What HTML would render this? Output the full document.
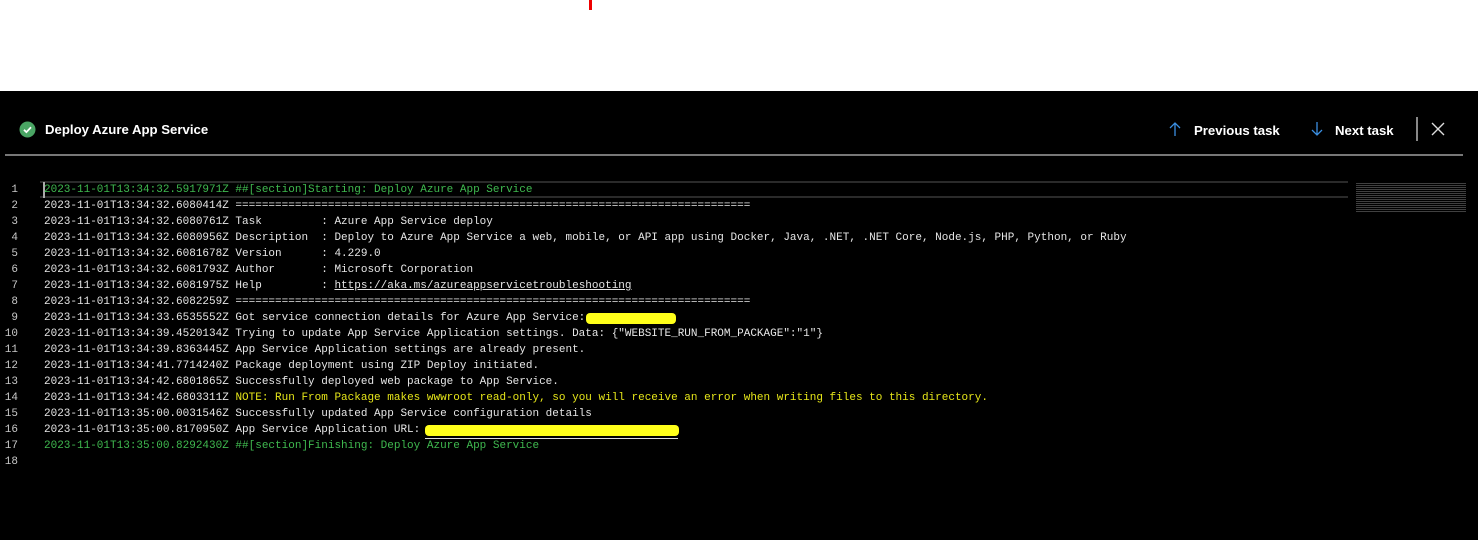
<!DOCTYPE html>
<html><head><style>
body{margin:0;width:1478px;height:540px;background:#fff;position:relative;overflow:hidden;font-family:"Liberation Sans",sans-serif}
#panel{position:absolute;left:0;top:91px;width:1478px;height:449px;background:#000}
.hdr{position:absolute;color:#fff;font-weight:bold;font-size:13.2px}
.log{position:absolute;left:0;top:182px;font-family:"Liberation Mono",monospace;font-size:11px;color:#e6e6e6}
.ln{position:absolute;left:0;width:1478px;height:16px;line-height:16px;white-space:pre}
.ln .n{position:absolute;left:0;width:18px;text-align:right;color:#c8c8c8}
.ln .t{position:absolute;left:44px}
.g{color:#3fb94f}.y{color:#e6e619}
.hl{position:absolute;background:#ffff1a;height:11px;border-radius:4px}
</style></head><body>
<div style="position:absolute;left:589px;top:0;width:3px;height:10px;background:#e00"></div>
<div id="panel"></div>
<svg style="position:absolute;left:19px;top:121px" width="17" height="17"><circle cx="8.5" cy="8.5" r="8" fill="#4aa564"/><path d="M5 8.8l2.4 2.3 4.6-4.8" stroke="#fff" stroke-width="1.8" fill="none"/></svg>
<div class="hdr" style="left:45px;top:122px">Deploy Azure App Service</div>
<svg style="position:absolute;left:1168px;top:121px" width="14" height="16"><path d="M7 15V2M2 7l5-5 5 5" stroke="#3a8ee0" stroke-width="1.3" fill="none"/></svg>
<div class="hdr" style="left:1194px;top:123px">Previous task</div>
<svg style="position:absolute;left:1310px;top:121px" width="14" height="16"><path d="M7 1v13M2 9l5 5 5-5" stroke="#3a8ee0" stroke-width="1.3" fill="none"/></svg>
<div class="hdr" style="left:1335px;top:123px">Next task</div>
<div style="position:absolute;left:1416px;top:117px;width:2px;height:24px;background:#888"></div>
<svg style="position:absolute;left:1431px;top:122px" width="14" height="14"><path d="M1 1l12 12M13 1L1 13" stroke="#ddd" stroke-width="1.4"/></svg>
<div style="position:absolute;left:5px;top:154px;width:1458px;height:2px;background:#777"></div>
<div style="position:absolute;left:40px;top:181px;width:1308px;height:17px;border-top:2px solid #2a2a2a;border-bottom:2px solid #2a2a2a;box-sizing:border-box"></div>
<div style="position:absolute;left:43px;top:182px;width:2px;height:16px;background:#aaa"></div>
<div style="position:absolute;left:1356px;top:183px;width:110px;height:30px;background:repeating-linear-gradient(#6a6a6a 0 1px,#000 1px 2px);opacity:.6"></div>
<div class="hl" style="left:586px;top:313px;width:90px"></div>
<div class="hl" style="left:425px;top:425px;width:254px"></div>
<div style="position:absolute;left:425px;top:438px;width:253px;height:1px;background:#ddd"></div>
<div class="log">
<div class="ln" style="top:0"><span class="n">1</span><span class="t g">2023-11-01T13:34:32.5917971Z ##[section]Starting: Deploy Azure App Service</span></div>
<div class="ln" style="top:16px"><span class="n">2</span><span class="t">2023-11-01T13:34:32.6080414Z ==============================================================================</span></div>
<div class="ln" style="top:32px"><span class="n">3</span><span class="t">2023-11-01T13:34:32.6080761Z Task         : Azure App Service deploy</span></div>
<div class="ln" style="top:48px"><span class="n">4</span><span class="t">2023-11-01T13:34:32.6080956Z Description  : Deploy to Azure App Service a web, mobile, or API app using Docker, Java, .NET, .NET Core, Node.js, PHP, Python, or Ruby</span></div>
<div class="ln" style="top:64px"><span class="n">5</span><span class="t">2023-11-01T13:34:32.6081678Z Version      : 4.229.0</span></div>
<div class="ln" style="top:80px"><span class="n">6</span><span class="t">2023-11-01T13:34:32.6081793Z Author       : Microsoft Corporation</span></div>
<div class="ln" style="top:96px"><span class="n">7</span><span class="t">2023-11-01T13:34:32.6081975Z Help         : <u>https://aka.ms/azureappservicetroubleshooting</u></span></div>
<div class="ln" style="top:112px"><span class="n">8</span><span class="t">2023-11-01T13:34:32.6082259Z ==============================================================================</span></div>
<div class="ln" style="top:128px"><span class="n">9</span><span class="t">2023-11-01T13:34:33.6535552Z Got service connection details for Azure App Service:</span></div>
<div class="ln" style="top:144px"><span class="n">10</span><span class="t">2023-11-01T13:34:39.4520134Z Trying to update App Service Application settings. Data: {"WEBSITE_RUN_FROM_PACKAGE":"1"}</span></div>
<div class="ln" style="top:160px"><span class="n">11</span><span class="t">2023-11-01T13:34:39.8363445Z App Service Application settings are already present.</span></div>
<div class="ln" style="top:176px"><span class="n">12</span><span class="t">2023-11-01T13:34:41.7714240Z Package deployment using ZIP Deploy initiated.</span></div>
<div class="ln" style="top:192px"><span class="n">13</span><span class="t">2023-11-01T13:34:42.6801865Z Successfully deployed web package to App Service.</span></div>
<div class="ln" style="top:208px"><span class="n">14</span><span class="t">2023-11-01T13:34:42.6803311Z <span class="y">NOTE: Run From Package makes wwwroot read-only, so you will receive an error when writing files to this directory.</span></span></div>
<div class="ln" style="top:224px"><span class="n">15</span><span class="t">2023-11-01T13:35:00.0031546Z Successfully updated App Service configuration details</span></div>
<div class="ln" style="top:240px"><span class="n">16</span><span class="t">2023-11-01T13:35:00.8170950Z App Service Application URL:</span></div>
<div class="ln" style="top:256px"><span class="n">17</span><span class="t g">2023-11-01T13:35:00.8292430Z ##[section]Finishing: Deploy Azure App Service</span></div>
<div class="ln" style="top:272px"><span class="n">18</span></div>
</div>
</body></html>
